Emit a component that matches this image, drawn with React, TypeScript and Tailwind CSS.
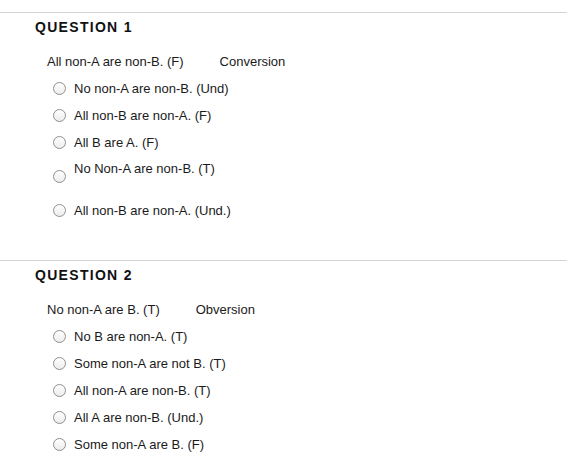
import React from "react";

type Opt = { text: string; tall?: boolean };

const Radio = () => (
  <span className="inline-block w-[13px] h-[13px] shrink-0 rounded-full border border-[#8f8f8f] bg-gradient-to-b from-white to-[#ececec]" />
);

const Question = ({
  n,
  statement,
  kind,
  options,
  last,
}: {
  n: number;
  statement: string;
  kind: string;
  options: Opt[];
  last?: boolean;
}) => (
  <section className={`border-t border-[#d4d4d4] pl-[35px] ${last ? "" : "pb-[36px]"}`}>
    <h2 className="mt-[6px] h-[16px] text-[14px] leading-[16px] font-bold tracking-[1.3px] text-[#111]">
      QUESTION {n}
    </h2>
    <div className="mt-[13px] h-[27px] flex items-center pl-[12px] gap-[36px]">
      <span>{statement}</span>
      <span>{kind}</span>
    </div>
    {options.map((o, i) => (
      <div
        key={i}
        className={`flex items-center pl-[18px] gap-[8px] ${o.tall ? "h-[41px]" : "h-[27px]"}`}
      >
        <Radio />
        {o.tall ? (
          <span className="flex flex-col">
            <span>{o.text}</span>
            <span className="h-[16px]" />
          </span>
        ) : (
          <span>{o.text}</span>
        )}
      </div>
    ))}
  </section>
);

export default function App() {
  return (
    <div
      className="w-[567px] h-[462px] overflow-hidden bg-white pt-[12px] text-[13px] leading-[16px] text-[#1a1a1a]"
      style={{ fontFamily: '"Liberation Sans", Arial, sans-serif' }}
    >
      <Question
        n={1}
        statement="All non-A are non-B. (F)"
        kind="Conversion"
        options={[
          { text: "No non-A are non-B. (Und)" },
          { text: "All non-B are non-A. (F)" },
          { text: "All B are A. (F)" },
          { text: "No Non-A are non-B. (T)", tall: true },
          { text: "All non-B are non-A. (Und.)" },
        ]}
      />
      <Question
        n={2}
        statement="No non-A are B. (T)"
        kind="Obversion"
        last
        options={[
          { text: "No B are non-A. (T)" },
          { text: "Some non-A are not B. (T)" },
          { text: "All non-A are non-B. (T)" },
          { text: "All A are non-B. (Und.)" },
          { text: "Some non-A are B. (F)" },
        ]}
      />
    </div>
  );
}
